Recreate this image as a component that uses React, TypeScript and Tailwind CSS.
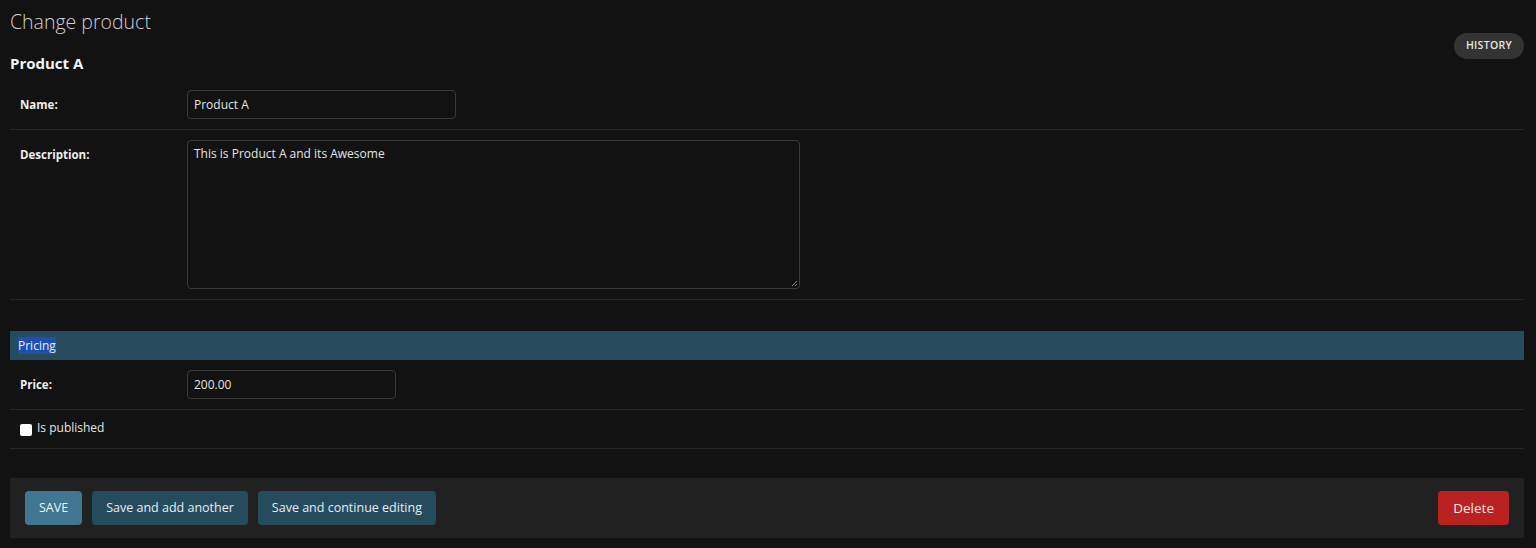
import React from "react";

const font = { fontFamily: '"Open Sans", "Noto Sans", "DejaVu Sans", sans-serif' };

export default function App() {
  return (
    <div className="min-h-[548px] w-full bg-[#121212] text-[#eeeeee]" style={font}>
      <div className="px-[10px] pt-[8px]">
        <h1 className="text-[19.5px] font-light leading-[28px] text-[#cfcfcf]">Change product</h1>
        <div className="flex items-start justify-between">
          <h2 className="mt-[17px] text-[15px] font-bold leading-[20px] text-[#f5f5f5]">Product A</h2>
          <button className="mr-[2px] -mt-[3px] h-[26px] rounded-full bg-[#333333] px-[12px] text-[10.5px] font-semibold uppercase tracking-[0.3px] text-[#e6e6e6]">
            History
          </button>
        </div>

        <div className="mt-[7px] mr-[2px]">
          {/* Name */}
          <div className="flex items-center border-b border-[#262626] py-[10px] pl-[10px]">
            <label className="w-[167px] text-[11.5px] font-bold text-[#eeeeee]">Name:</label>
            <div className="flex h-[29px] w-[269px] items-center rounded-[4px] border border-[#3a3a3a] bg-[#121212] px-[6px] text-[12px] text-[#e4e4e4]">
              Product A
            </div>
          </div>

          {/* Description */}
          <div className="flex items-start border-b border-[#262626] py-[10px] pl-[10px]">
            <label className="w-[167px] pt-[6px] text-[11.5px] font-bold text-[#eeeeee]">Description:</label>
            <div className="relative h-[149px] w-[613px] rounded-[4px] border border-[#3a3a3a] bg-[#121212] px-[6px] pt-[4px] text-[12px] text-[#e4e4e4]">
              This is Product A and its Awesome
              <svg className="absolute bottom-[1px] right-[1px]" width="8" height="8" viewBox="0 0 8 8">
                <path d="M7 2 L2 7 M7 5 L5 7" stroke="#8a8a8a" strokeWidth="1" />
              </svg>
            </div>
          </div>

          {/* Pricing */}
          <div className="mt-[31px] flex h-[29px] items-center bg-[#264b5d] pl-[8px]">
            <span className="bg-[#1f4fb0] text-[12px] leading-[17px] text-[#e8eef5]">Pricing</span>
          </div>

          <div className="flex items-center border-b border-[#262626] py-[10px] pl-[10px]">
            <label className="w-[167px] text-[11.5px] font-bold text-[#eeeeee]">Price:</label>
            <div className="flex h-[29px] w-[209px] items-center rounded-[4px] border border-[#3a3a3a] bg-[#121212] px-[6px] text-[12px] text-[#e4e4e4]">
              200.00
            </div>
          </div>

          <div className="flex h-[39px] items-start border-b border-[#262626] pl-[10px] pt-[9px]">
            <span className="mt-[5px] inline-block h-[12px] w-[12px] rounded-[2px] bg-white" />
            <span className="ml-[5px] text-[12px] text-[#e4e4e4]">Is published</span>
          </div>

          {/* Submit row */}
          <div className="mt-[29px] flex h-[60px] items-center justify-between bg-[#212121] px-[15px]">
            <div className="flex items-center gap-[10px]">
              <button className="h-[34px] rounded-[4px] bg-[#417690] px-[14px] text-[12.5px] text-[#eef4f8]">SAVE</button>
              <button className="h-[34px] rounded-[4px] bg-[#264b5d] px-[14px] text-[12.5px] text-[#e6edf1]">Save and add another</button>
              <button className="h-[34px] rounded-[4px] bg-[#264b5d] px-[14px] text-[12.5px] text-[#e6edf1]">Save and continue editing</button>
            </div>
            <button className="h-[34px] rounded-[4px] bg-[#ba2121] px-[15px] text-[13.5px] text-[#f8e6e6]">Delete</button>
          </div>
        </div>
      </div>
    </div>
  );
}
